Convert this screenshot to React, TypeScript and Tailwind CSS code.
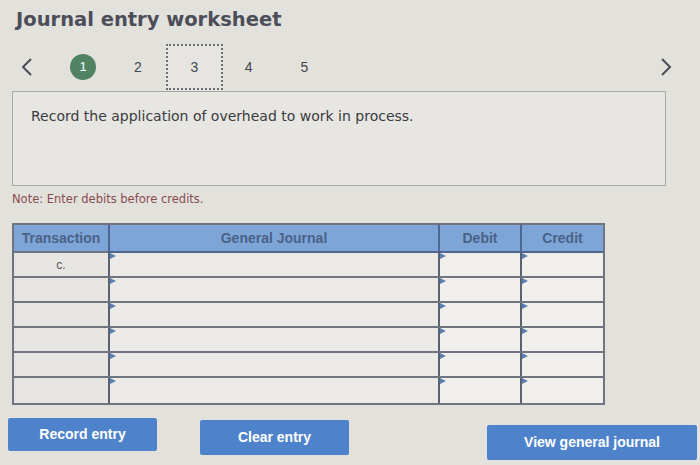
import React from "react";

const rows = ["c.", "", "", "", "", ""];

function Marker() {
  return (
    <svg className="absolute left-0 top-0" width="6" height="8" viewBox="0 0 6 8">
      <path d="M0 0 L6 3 L0 6 Z" fill="#5b7fb0" />
    </svg>
  );
}

export default function App() {
  return (
    <div className="w-[700px] h-[465px] bg-[#e2e1dc] overflow-hidden relative" style={{ fontFamily: "'DejaVu Sans', Verdana, sans-serif" }}>
      <h1 className="pl-[16px] pt-[7px] text-[19.5px] font-bold text-[#4b4e58] leading-[26px]">Journal entry worksheet</h1>

      <div className="flex items-center h-[46px] mt-[11px] relative z-10">
        <svg className="ml-[20px]" width="14" height="20" viewBox="0 0 14 20">
          <path d="M11 2 L3 10 L11 18" stroke="#4a4d57" strokeWidth="2" fill="none" />
        </svg>
        <div className="ml-[36px] w-[26px] h-[26px] rounded-full bg-[#4f8361] text-white text-[13px] flex items-center justify-center" style={{ fontFamily: "'Liberation Sans', Arial, sans-serif" }}>1</div>
        <div className="ml-[38px] text-[14px] text-[#44464d]" style={{ fontFamily: "'Liberation Sans', Arial, sans-serif" }}>2</div>
        <div className="ml-[24px] w-[57px] h-[46px] border-2 border-dotted border-[#6b6e76] bg-[#e6e5e1] flex items-center justify-center text-[14px] text-[#44464d]" style={{ fontFamily: "'Liberation Sans', Arial, sans-serif" }}>3</div>
        <div className="ml-[22px] text-[14px] text-[#44464d]" style={{ fontFamily: "'Liberation Sans', Arial, sans-serif" }}>4</div>
        <div className="ml-[48px] text-[14px] text-[#44464d]" style={{ fontFamily: "'Liberation Sans', Arial, sans-serif" }}>5</div>
        <svg className="ml-auto mr-[27px]" width="14" height="20" viewBox="0 0 14 20">
          <path d="M3 2 L11 10 L3 18" stroke="#4a4d57" strokeWidth="2" fill="none" />
        </svg>
      </div>

      <div className="ml-[12px] w-[654px] h-[95px] mt-[1px] border border-[#a9a9a6] bg-[#e7e6e2] pl-[18px] pt-[14px]">
        <p className="text-[14px] text-[#3a3b40]">Record the application of overhead to work in process.</p>
      </div>

      <p className="ml-[12px] mt-[5px] text-[11.5px] text-[#8a4b4f]">Note: Enter debits before credits.</p>

      <div className="ml-[12px] mt-[15px] w-[593px] border-2 border-[#6e7480]" style={{ fontFamily: "'Liberation Sans', Arial, sans-serif" }}>
        <div className="grid grid-cols-[94px_330px_82px_83px] h-[28px] bg-[#7ea5d8] text-[#4b6286] font-bold text-[14px]">
          <div className="flex items-center justify-center border-b-2 border-[#6e7480]">Transaction</div>
          <div className="flex items-center justify-center border-l-2 border-b-2 border-[#4e6690]">General Journal</div>
          <div className="flex items-center justify-center border-l-2 border-b-2 border-[#4e6690]">Debit</div>
          <div className="flex items-center justify-center border-l-2 border-b-2 border-[#4e6690]">Credit</div>
        </div>
        {rows.map((r, i) => (
          <div key={i} className={`grid grid-cols-[94px_330px_82px_83px] h-[25px] ${i < rows.length - 1 ? "border-b-2 border-[#6e7480]" : ""}`}>
            <div className="bg-[#e6e5e1] flex items-center justify-center text-[12px] text-[#55585f]">{r}</div>
            <div className="relative bg-[#ebeae6] border-l-2 border-[#5a6170]"><Marker /></div>
            <div className="relative bg-[#f0efec] border-l-2 border-[#5a6170]"><Marker /></div>
            <div className="relative bg-[#f0efec] border-l-2 border-[#5a6170]"><Marker /></div>
          </div>
        ))}
      </div>

      <div className="flex items-start mt-[13px]" style={{ fontFamily: "'Liberation Sans', Arial, sans-serif" }}>
        <button className="ml-[8px] w-[149px] h-[33px] bg-[#4e83cc] text-white font-bold text-[14px] rounded-[2px]">Record entry</button>
        <button className="ml-[43px] mt-[2px] w-[149px] h-[35px] bg-[#4e83cc] text-white font-bold text-[14px] rounded-[2px]">Clear entry</button>
        <button className="ml-[138px] mt-[7px] w-[210px] h-[35px] bg-[#4e83cc] text-white font-bold text-[14px] rounded-[2px]">View general journal</button>
      </div>
    </div>
  );
}
